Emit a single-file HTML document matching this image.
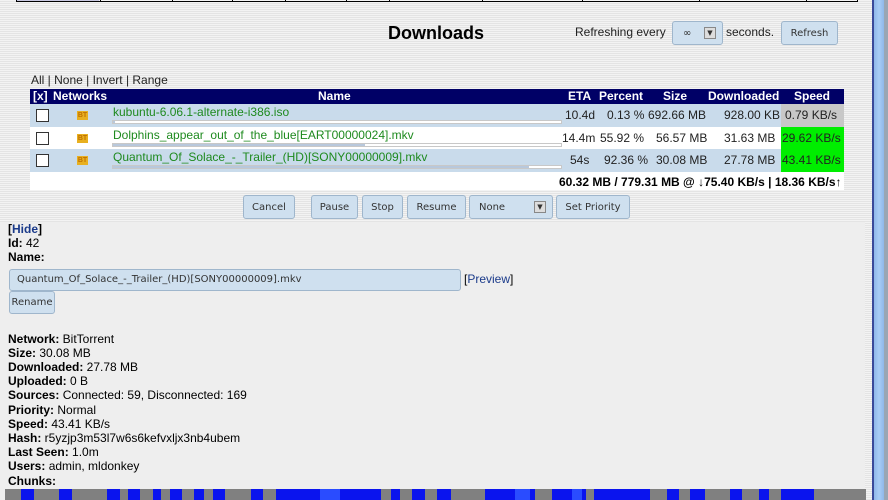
<!DOCTYPE html>
<html><head><meta charset="utf-8"><style>
*{margin:0;padding:0;box-sizing:border-box}
body{width:888px;height:500px;overflow:hidden;position:relative;font-family:"Liberation Sans",sans-serif;font-size:12px;color:#000;
background:repeating-linear-gradient(#f3f3f3 0 1px,#e4e4e4 1px 2px)}
.a{position:absolute;white-space:nowrap}
.btn{position:absolute;background:#cfe0ef;border:1px solid #9fb6cc;border-radius:3px;font-family:"DejaVu Sans",sans-serif;font-size:10px;color:#333;text-align:center;line-height:23px;height:24px}
.sel .arr{position:absolute;right:6px;top:5px;width:12px;height:12px;background:#ddd;border:1px solid #888;font-size:7px;line-height:10px;text-align:center}
.hd{position:absolute;left:30px;top:89px;width:814px;height:15px;background:#000066;color:#fff;font-weight:bold;font-size:12px}
.row{position:absolute;left:30px;width:814px}
.cb{position:absolute;left:6px;top:5px;width:13px;height:13px;border:1px solid #333;background:#fff}
.bt{position:absolute;left:47px;top:7px;width:11px;height:9px;background:#e8b020;color:#c07000;font-size:7px;font-weight:bold;line-height:9px;text-align:center}
.nm{position:absolute;left:83px;top:1px;color:#1e8a1e;font-size:12px}
.pb{position:absolute;left:82px;top:16px;width:450px;height:4px;border:1px solid #c8c8c8;background:#fff}
.pb i{display:block;height:2px;background:#b8c8dc}
.c{position:absolute;top:4px;font-size:12px;color:#222}
.det b{font-weight:bold}
.dv{position:absolute;top:0;width:1px;height:2px;background:#000}
</style></head><body>
<div class="a" style="left:16px;top:1px;width:842px;height:1px;background:#000"></div>
<div class="dv" style="left:16px"></div><div class="dv" style="left:100px"></div><div class="dv" style="left:172px"></div><div class="dv" style="left:232px"></div><div class="dv" style="left:285px"></div><div class="dv" style="left:346px"></div><div class="dv" style="left:389px"></div><div class="dv" style="left:482px"></div><div class="dv" style="left:582px"></div><div class="dv" style="left:699px"></div><div class="dv" style="left:806px"></div><div class="dv" style="left:857px"></div>
<div class="a" style="left:17px;top:0;width:82px;height:1px;background:#c8c8e0"></div>
<div class="a" style="left:872px;top:0;width:2px;height:500px;background:#3a4a9a"></div>
<div class="a" style="left:874px;top:0;width:10px;height:500px;background:linear-gradient(90deg,#8fb8ea,#a9cdf5,#8fb8ea)"></div>
<div class="a" style="left:884px;top:0;width:4px;height:500px;background:#9aa6b4"></div>

<div class="a" style="left:388px;top:23px;font-size:18px;font-weight:bold">Downloads</div>
<div class="a" style="left:575px;top:25px;font-size:12px;color:#222">Refreshing every</div>
<div class="btn sel" style="left:672px;top:21px;width:51px;text-align:left;padding-left:10px">∞<span class="arr">▼</span></div>
<div class="a" style="left:726px;top:25px;font-size:12px;color:#222">seconds.</div>
<div class="btn" style="left:781px;top:21px;width:57px">Refresh</div>

<div class="a" style="left:31px;top:73px;font-size:12px;color:#222">All | None | Invert | Range</div>
<div class="hd">
<span class="a" style="left:3px;top:0">[x]</span>
<span class="a" style="left:23px;top:0">Networks</span>
<span class="a" style="left:288px;top:0">Name</span>
<span class="a" style="left:538px;top:0">ETA</span>
<span class="a" style="left:569px;top:0">Percent</span>
<span class="a" style="left:633px;top:0">Size</span>
<span class="a" style="left:678px;top:0">Downloaded</span>
<span class="a" style="left:764px;top:0">Speed</span>
</div>

<div class="row" style="top:104px;height:23px;background:#c9dbeb">
<div class="cb"></div><div class="bt">BT</div><div class="nm">kubuntu-6.06.1-alternate-i386.iso</div>
<div class="pb"><i style="width:2px"></i></div>
<span class="c" style="left:535px">10.4d</span><span class="c" style="left:577px">0.13 %</span><span class="c" style="left:618px">692.66 MB</span><span class="c" style="left:694px">928.00 KB</span>
<div class="a" style="left:751px;top:0;width:63px;height:23px;background:#c8c8c8"></div><span class="c" style="left:755px">0.79 KB/s</span>
</div>
<div class="row" style="top:127px;height:22px;background:#fff">
<div class="cb"></div><div class="bt">BT</div><div class="nm">Dolphins_appear_out_of_the_blue[EART00000024].mkv</div>
<div class="pb"><i style="width:252px"></i></div>
<span class="c" style="left:532px">14.4m</span><span class="c" style="left:570px">55.92 %</span><span class="c" style="left:626px">56.57 MB</span><span class="c" style="left:694px">31.63 MB</span>
<div class="a" style="left:751px;top:0;width:63px;height:22px;background:#00ee00"></div><span class="c" style="left:752px">29.62 KB/s</span>
</div>
<div class="row" style="top:149px;height:23px;background:#c9dbeb">
<div class="cb"></div><div class="bt">BT</div><div class="nm">Quantum_Of_Solace_-_Trailer_(HD)[SONY00000009].mkv</div>
<div class="pb"><i style="width:416px"></i></div>
<span class="c" style="left:540px">54s</span><span class="c" style="left:574px">92.36 %</span><span class="c" style="left:626px">30.08 MB</span><span class="c" style="left:694px">27.78 MB</span>
<div class="a" style="left:751px;top:0;width:63px;height:23px;background:#00ee00"></div><span class="c" style="left:752px">43.41 KB/s</span>
</div>
<div class="row" style="top:172px;height:18px;background:#fff">
<span class="a" style="left:529px;top:3px;font-weight:bold;font-size:12px">60.32 MB / 779.31 MB @ ↓75.40 KB/s | 18.36 KB/s↑</span>
</div>

<div class="btn" style="left:243px;top:195px;width:52px">Cancel</div>
<div class="btn" style="left:311px;top:195px;width:47px">Pause</div>
<div class="btn" style="left:362px;top:195px;width:41px">Stop</div>
<div class="btn" style="left:407px;top:195px;width:59px">Resume</div>
<div class="btn sel" style="left:469px;top:195px;width:84px;text-align:left;padding-left:9px">None<span class="arr">▼</span></div>
<div class="btn" style="left:556px;top:195px;width:74px">Set Priority</div>

<div class="a" style="left:0;top:222px;width:865px;height:278px;background:#eeeeee"></div>
<div class="det">
<div class="a" style="left:8px;top:222px;font-weight:bold">[<span style="color:#1a3a8a">Hide</span>]</div>
<div class="a" style="left:8px;top:236px"><b>Id:</b> 42</div>
<div class="a" style="left:8px;top:250px"><b>Name:</b></div>
<div class="btn" style="left:9px;top:269px;width:452px;height:22px;line-height:20px;text-align:left;padding-left:7px;font-size:10px">Quantum_Of_Solace_-_Trailer_(HD)[SONY00000009].mkv</div>
<div class="a" style="left:464px;top:272px">[<span style="color:#1a3a8a">Preview</span>]</div>
<div class="btn" style="left:9px;top:291px;width:46px;height:23px;line-height:22px">Rename</div>
<div class="a" style="left:8px;top:332px"><b>Network:</b> BitTorrent</div>
<div class="a" style="left:8px;top:346px"><b>Size:</b> 30.08 MB</div>
<div class="a" style="left:8px;top:360px"><b>Downloaded:</b> 27.78 MB</div>
<div class="a" style="left:8px;top:374px"><b>Uploaded:</b> 0 B</div>
<div class="a" style="left:8px;top:388px"><b>Sources:</b> Connected: 59, Disconnected: 169</div>
<div class="a" style="left:8px;top:403px"><b>Priority:</b> Normal</div>
<div class="a" style="left:8px;top:417px"><b>Speed:</b> 43.41 KB/s</div>
<div class="a" style="left:8px;top:431px"><b>Hash:</b> r5yzjp3m53l7w6s6kefvxljx3nb4ubem</div>
<div class="a" style="left:8px;top:445px"><b>Last Seen:</b> 1.0m</div>
<div class="a" style="left:8px;top:459px"><b>Users:</b> admin, mldonkey</div>
<div class="a" style="left:8px;top:474px"><b>Chunks:</b></div>
</div>
<div class="a" style="left:5px;top:489px;width:861px;height:11px;background:#808080"></div>
<svg class="a" style="left:0;top:489px" width="866" height="11">
<g fill="#0a14ee">
<rect x="21" width="13" height="11"/><rect x="59" width="13" height="11"/><rect x="107" width="13" height="11"/><rect x="128" width="12" height="11"/><rect x="153" width="8" height="11"/><rect x="170" width="12" height="11"/><rect x="194" width="10" height="11"/><rect x="213" width="12" height="11"/><rect x="251" width="12" height="11"/><rect x="276" width="105" height="11"/><rect x="391" width="9" height="11"/><rect x="412" width="13" height="11"/><rect x="437" width="14" height="11"/><rect x="485" width="50" height="11"/><rect x="552" width="34" height="11"/><rect x="594" width="56" height="11"/><rect x="667" width="12" height="11"/><rect x="690" width="15" height="11"/><rect x="730" width="12" height="11"/><rect x="759" width="10" height="11"/><rect x="781" width="33" height="11"/>
</g>
<g fill="#2a4cff"><rect x="320" width="20" height="11"/><rect x="515" width="15" height="11"/><rect x="572" width="10" height="11"/></g>
</svg>
</body></html>
